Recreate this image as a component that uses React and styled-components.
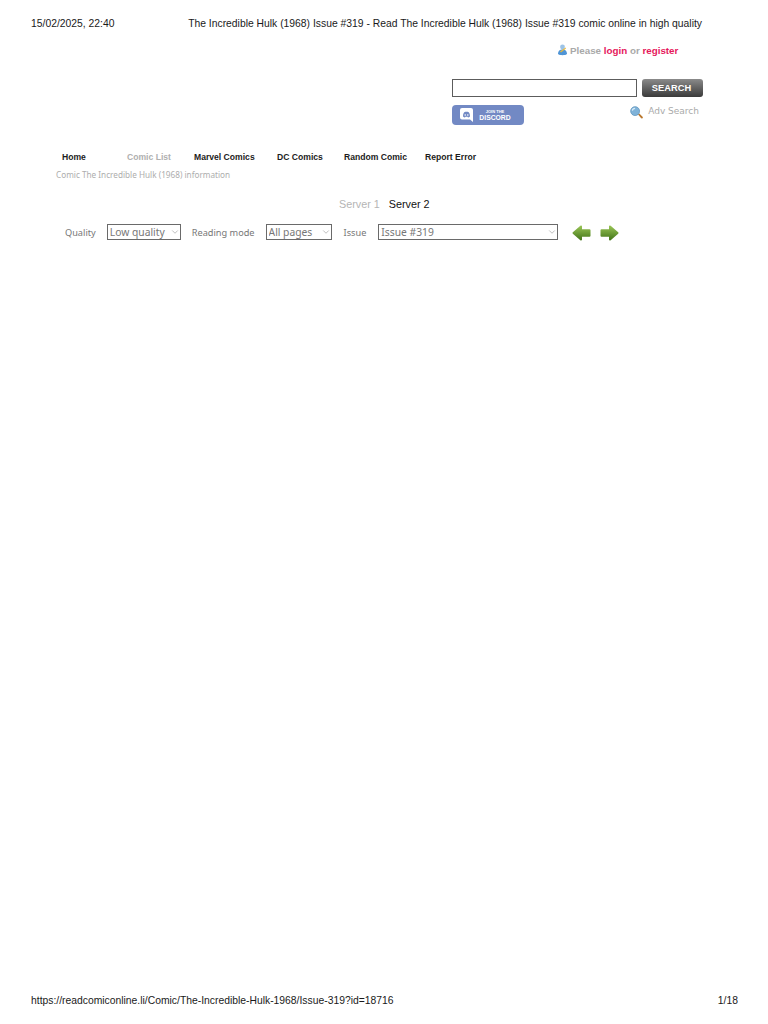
import React from 'react';
import styled, { createGlobalStyle } from 'styled-components';
import { ChevronDown } from 'lucide-react';

const GlobalStyle = createGlobalStyle`
  html, body {
    margin: 0;
    padding: 0;
    background: #fff;
  }
`;

const Sheet = styled.div`
  width: 768px;
  height: 1024px;
  display: flex;
  flex-direction: column;
  font-family: 'Liberation Sans', Arial, sans-serif;
  overflow: hidden;
`;

const PrintBar = styled.div`
  height: 13px;
  display: flex;
  justify-content: space-between;
  padding: 0 30px 0 31px;
  font-size: 10.35px;
  line-height: 13px;
  color: #1a1a1a;
  white-space: nowrap;
  margin-top: ${(p) => (p.$bottom ? 'auto' : '17px')};
  margin-bottom: ${(p) => (p.$bottom ? '17px' : '0')};
`;

const DocTitle = styled.span`
  margin-right: 36px;
`;

const SiteHeader = styled.div`
  margin: 14px 0 0 452px;
  width: 251px;
`;

const LoginLine = styled.div`
  display: flex;
  align-items: center;
  margin-left: 105px;
  height: 12px;
  font-size: 9.8px;
  font-weight: bold;
  color: #a9a9a9;
  white-space: pre;
`;

const UserIcon = styled.svg`
  width: 11px;
  height: 12px;
  margin-right: 2px;
`;

const LoginLink = styled.a`
  color: #e6185c;
  text-decoration: none;
`;

const SearchRow = styled.form`
  display: flex;
  gap: 5px;
  margin-top: 23px;
`;

const SearchInput = styled.input`
  box-sizing: border-box;
  width: 185px;
  height: 18px;
  padding: 0 3px;
  border: 1px solid #5c5c5c;
  background: #fff;
  outline: none;
`;

const SearchButton = styled.button`
  width: 61px;
  height: 18px;
  padding: 0 2px 0 0;
  border: 0;
  border-radius: 3px;
  background: linear-gradient(#8a8a8a, #6a6a6a 40%, #3a3a3a);
  color: #fff;
  font-family: 'Liberation Sans', Arial, sans-serif;
  font-size: 9.3px;
  font-weight: bold;
  cursor: pointer;
`;

const ToolRow = styled.div`
  display: flex;
  justify-content: space-between;
  margin-top: 8px;
`;

const DiscordBadge = styled.a`
  width: 72px;
  height: 20px;
  box-sizing: border-box;
  display: flex;
  align-items: center;
  gap: 4px;
  padding-left: 8px;
  border-radius: 4px;
  background: #7289c4;
  color: #fff;
  text-decoration: none;
`;

const DiscordIcon = styled.svg`
  width: 13px;
  height: 14px;
  flex: none;
`;

const DiscordWords = styled.span`
  display: flex;
  flex-direction: column;
  align-items: center;
  width: 36px;
  font-weight: bold;
`;

const DiscordSmall = styled.span`
  font-size: 4px;
  line-height: 5px;
`;

const DiscordBig = styled.span`
  font-size: 6.8px;
  line-height: 8px;
`;

const AdvSearch = styled.a`
  display: flex;
  align-items: flex-start;
  gap: 5px;
  height: 14px;
  margin-right: 4px;
  font-family: 'DejaVu Sans', Verdana, sans-serif;
  font-size: 9px;
  line-height: 12px;
  color: #aaa;
  text-decoration: none;
`;

const LensIcon = styled.svg`
  width: 13px;
  height: 13px;
  margin-top: 1px;
`;

const NavBar = styled.nav`
  display: grid;
  grid-template-columns: 65px 67px 83px 67px 81px auto;
  margin: 26px 0 0 62px;
  height: 12px;
`;

const NavItem = styled.a`
  font-size: 8.6px;
  line-height: 12px;
  font-weight: bold;
  color: ${(p) => (p.$muted ? '#b0b0b0' : '#1c1c1c')};
  text-decoration: none;
  white-space: nowrap;
`;

const InfoLine = styled.div`
  margin: 6px 0 0 56px;
  font-family: 'Noto Sans', 'DejaVu Sans', sans-serif;
  font-size: 8.2px;
  line-height: 12px;
  color: #adadad;
`;

const ServerRow = styled.div`
  display: flex;
  gap: 9px;
  margin: 17px 0 0 339px;
  font-size: 10.8px;
  line-height: 13px;
`;

const ServerTab = styled.a`
  color: ${(p) => (p.$active ? '#111' : '#b5b5b5')};
  cursor: pointer;
`;

const ControlRow = styled.div`
  display: flex;
  align-items: center;
  height: 16px;
  margin: 13px 0 0 65px;
`;

const ControlLabel = styled.label`
  font-family: 'Noto Sans', 'DejaVu Sans', sans-serif;
  font-size: 9.2px;
  color: #777;
  margin-right: ${(p) => p.$gap}px;
  white-space: nowrap;
`;

const SelectWrap = styled.div`
  position: relative;
  width: ${(p) => p.$width}px;
  height: 16px;
  margin-right: ${(p) => p.$gap}px;
  flex: none;
`;

const ControlSelect = styled.select`
  appearance: none;
  box-sizing: border-box;
  display: block;
  width: 100%;
  height: 100%;
  padding: 0 0 0 2px;
  border: 1px solid #6a6a6a;
  border-radius: 0;
  background: #fff;
  color: #777;
  font-family: 'Noto Sans', 'DejaVu Sans', sans-serif;
  font-size: 10.3px;
`;

const SelectChevron = styled(ChevronDown)`
  position: absolute;
  right: 1px;
  top: 3px;
  width: 10px;
  height: 10px;
  color: #999;
  pointer-events: none;
`;

const ArrowIcon = styled.svg`
  width: 19px;
  height: 18px;
  margin: 2px ${(p) => p.$gap}px 0 0;
  flex: none;
  transform: ${(p) => (p.$flip ? 'scaleX(-1)' : 'none')};
`;

const UserGlyph = () => (
  <UserIcon viewBox="0 0 11 12">
    <circle cx="5.500" cy="3" r="2.400" fill="#9cc3e6" />
    <path d="M1 10c0-3.400 2-4.600 4.500-4.600S10 6.600 10 10c-1.500 1.600-7.500 1.600-9 0z" fill="#4f95d6" />
    <path d="M3 7.500 8.500 3.500 9 4.500 4 8.500z" fill="#e8b93c" />
  </UserIcon>
);

const DiscordGlyph = () => (
  <DiscordIcon viewBox="0 0 13 14">
    <path d="M2 0h9a2 2 0 0 1 2 2v12l-3-2.500H2a2 2 0 0 1-2-2V2a2 2 0 0 1 2-2z" fill="#fff" />
    <path d="M3 8.500c0-2 .6-3.500 1.200-4.200 1.500-.6 3.100-.6 4.600 0 .6.700 1.200 2.200 1.200 4.200-.7.600-1.400.9-2 1l-.5-.8H5.500l-.5.800c-.6-.1-1.300-.4-2-1z" fill="#7289c4" />
    <circle cx="5.200" cy="7" r=".8" fill="#fff" />
    <circle cx="7.800" cy="7" r=".8" fill="#fff" />
  </DiscordIcon>
);

const LensGlyph = () => (
  <LensIcon viewBox="0 0 14 14">
    <path d="M8.500 9 10 8l3.500 3.500a1 1 0 0 1-1.700 1.500z" fill="#b9772e" />
    <circle cx="5.500" cy="5.500" r="4.800" fill="#7fb2d8" stroke="#5c93bb" strokeWidth=".8" />
    <path d="M2.500 5a3 3 0 0 1 3-2.500" fill="none" stroke="#d9ecf8" strokeWidth="1.300" />
  </LensIcon>
);

const Arrow = ({ flip, gap }) => {
  const fillId = flip ? 'arrowFlip' : 'arrowPlain';
  return (
    <ArrowIcon viewBox="0 0 19 18" $gap={gap} $flip={flip}>
      <defs>
        <linearGradient id={fillId} x1="0" y1="0" x2="0" y2="1">
          <stop offset="0" stopColor="#94c052" />
          <stop offset="1" stopColor="#47791c" />
        </linearGradient>
      </defs>
      <path
        d="M1.500 9 9 2.500v3.700h8.500v5.600H9v3.700z"
        fill={`url(#${fillId})`}
        stroke={`url(#${fillId})`}
        strokeWidth="2"
        strokeLinejoin="round"
      />
    </ArrowIcon>
  );
};

const Picker = ({ width, gap, children }) => (
  <SelectWrap $width={width} $gap={gap}>
    <ControlSelect>{children}</ControlSelect>
    <SelectChevron strokeWidth={1.5} />
  </SelectWrap>
);

export default function App() {
  return (
    <Sheet>
      <GlobalStyle />
      <PrintBar>
        <span>15/02/2025, 22:40</span>
        <DocTitle>The Incredible Hulk (1968) Issue #319 - Read The Incredible Hulk (1968) Issue #319 comic online in high quality</DocTitle>
      </PrintBar>

      <SiteHeader>
        <LoginLine>
          <UserGlyph />
          Please <LoginLink href="#">login</LoginLink> or <LoginLink href="#">register</LoginLink>
        </LoginLine>
        <SearchRow onSubmit={(e) => e.preventDefault()}>
          <SearchInput type="text" />
          <SearchButton type="submit">SEARCH</SearchButton>
        </SearchRow>
        <ToolRow>
          <DiscordBadge href="#">
            <DiscordGlyph />
            <DiscordWords>
              <DiscordSmall>JOIN THE</DiscordSmall>
              <DiscordBig>DISCORD</DiscordBig>
            </DiscordWords>
          </DiscordBadge>
          <AdvSearch href="#">
            <LensGlyph />
            Adv Search
          </AdvSearch>
        </ToolRow>
      </SiteHeader>

      <NavBar>
        <NavItem href="#">Home</NavItem>
        <NavItem href="#" $muted>Comic List</NavItem>
        <NavItem href="#">Marvel Comics</NavItem>
        <NavItem href="#">DC Comics</NavItem>
        <NavItem href="#">Random Comic</NavItem>
        <NavItem href="#">Report Error</NavItem>
      </NavBar>
      <InfoLine>Comic The Incredible Hulk (1968) information</InfoLine>

      <ServerRow>
        <ServerTab>Server 1</ServerTab>
        <ServerTab $active>Server 2</ServerTab>
      </ServerRow>

      <ControlRow>
        <ControlLabel $gap={11}>Quality</ControlLabel>
        <Picker width={74} gap={11}>
          <option>Low quality</option>
          <option>High quality</option>
        </Picker>
        <ControlLabel $gap={11}>Reading mode</ControlLabel>
        <Picker width={66} gap={12}>
          <option>All pages</option>
          <option>One page</option>
        </Picker>
        <ControlLabel $gap={12}>Issue</ControlLabel>
        <Picker width={180} gap={14}>
          <option>Issue #319</option>
        </Picker>
        <Arrow gap={9} />
        <Arrow flip gap={0} />
      </ControlRow>

      <PrintBar $bottom>
        <span>https://readcomiconline.li/Comic/The-Incredible-Hulk-1968/Issue-319?id=18716</span>
        <span>1/18</span>
      </PrintBar>
    </Sheet>
  );
}
